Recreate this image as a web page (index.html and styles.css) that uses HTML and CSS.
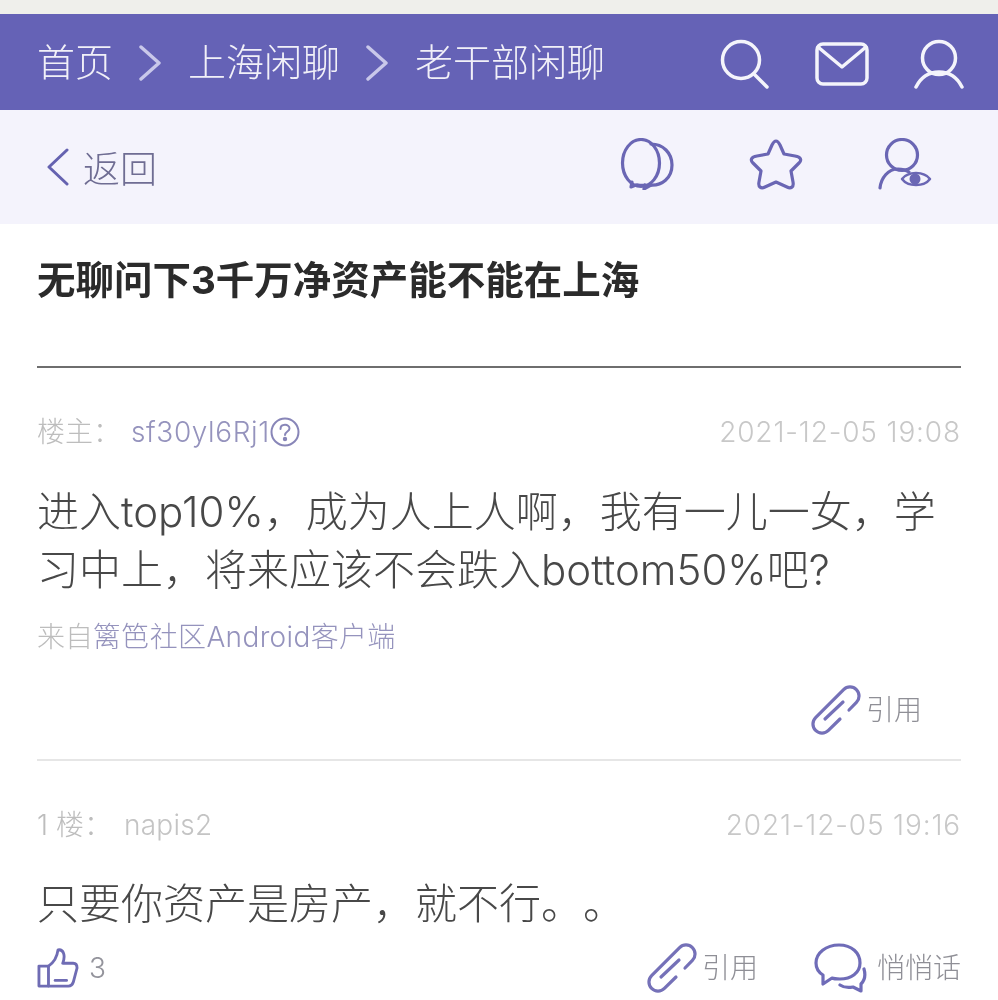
FILE: index.html
```html
<!DOCTYPE html>
<html lang="zh-CN">
    <head>
        <meta charset="UTF-8">
        <meta name="viewport" content="width=device-width, initial-scale=1.0">
        <link rel="stylesheet" href="styles.css">
        <title>无聊问下3千万净资产能不能在上海</title>
    </head>
    <body>
        <div class="top-strip"></div>
        <nav class="nav">
            <div class="crumbs">
                <span>首页</span>
                <svg class="crumb-arrow" viewBox="0 0 22 36"><path d="M2 2 L20 18 L2 34"/></svg>
                <span>上海闲聊</span>
                <svg class="crumb-arrow" viewBox="0 0 22 36"><path d="M2 2 L20 18 L2 34"/></svg>
                <span>老干部闲聊</span>
            </div>
            <div class="nav-icons">
                <svg class="icon-search" viewBox="0 0 50 50"><circle cx="21" cy="21" r="18.5"/><path d="M34 35 L47 48"/></svg>
                <svg class="icon-mail" viewBox="0 0 54 44"><rect x="2" y="2" width="50" height="40" rx="6"/><path d="M3 5 L27 25 L51 5"/></svg>
                <svg class="icon-user" viewBox="0 0 50 50"><circle cx="25" cy="19" r="16.5"/><path d="M2 48 C7 38 15 33 25 33 C35 33 43 38 48 48"/></svg>
            </div>
        </nav>
        <div class="subbar">
            <div class="back">
                <svg class="back-arrow" viewBox="0 0 24 38"><path d="M21 2 L3 19 L21 36"/></svg>
                <span>返回</span>
            </div>
            <div class="sub-icons">
                <svg class="icon-bubbles" viewBox="0 0 54 52"><ellipse cx="21" cy="25" rx="18.5" ry="23.5"/><path d="M31 6 C43 6 52 15 52 27 C52 40 42 48 30 47 C26 47 22 48 18 47"/><path d="M12 44 L11 49 L16 47"/><path d="M25 47 L24 51 L31 47"/></svg>
                <svg class="icon-star" viewBox="0 0 54 52"><path d="M27 3 C29 3 30 5 31 7 L35 16 L46 18 C52 19 53 22 50 25 L42 33 L44 44 C45 49 42 51 38 49 L27 44 L16 49 C12 51 9 49 10 44 L12 33 L4 25 C1 22 2 19 8 18 L19 16 L23 7 C24 5 25 3 27 3 Z"/></svg>
                <svg class="icon-watch" viewBox="0 0 54 52"><circle cx="24" cy="17" r="15.5"/><path d="M2 50 C3 40 10 31 20 31 C24 31 28 32 31 34"/><path class="eye" d="M24 41 C30 33 46 33 52 41 C46 49 30 49 24 41 Z"/><circle class="pupil" cx="37" cy="41" r="5.5"/></svg>
            </div>
        </div>
        <main class="content">
            <h1 class="title">无聊问下3千万净资产能不能在上海</h1>
            <section class="post first-post">
                <div class="post-head">
                    <div class="author"><span class="label">楼主：</span><span class="name">sf30yl6Rj1</span><svg class="icon-help" viewBox="0 0 30 30"><circle cx="15" cy="15" r="13.5"/><path d="M10.5 12 C10.5 6.5 19.5 6.5 19.5 11.5 C19.5 14.5 15 14.5 15 18"/><circle class="dot" cx="15" cy="22" r="1.2"/></svg></div>
                    <span class="time">2021-12-05 19:08</span>
                </div>
                <p class="post-body">进入top10%，成为人上人啊，我有一儿一女，学习中上，将来应该不会跌入bottom50%吧?</p>
                <div class="source"><span class="label">来自</span><span class="name">篱笆社区Android客户端</span></div>
                <div class="actions">
                    <div class="action">
                        <svg class="icon-clip" viewBox="0 0 50 50"><path d="M38 25 L45.4 17.4 A9 9 0 0 0 32.6 4.6 L4.6 32.6 A9 9 0 0 0 17.4 45.4 L29 34"/><path d="M14 34 L32 17"/></svg>
                        <span>引用</span>
                    </div>
                </div>
            </section>
            <section class="post">
                <div class="post-head">
                    <div class="author"><span class="label">1 楼：</span><span class="reply-name">napis2</span></div>
                    <span class="time">2021-12-05 19:16</span>
                </div>
                <p class="post-body reply-body">只要你资产是房产，就不行。。</p>
                <div class="reply-foot">
                    <div class="like">
                        <svg class="icon-thumb" viewBox="0 0 44 42"><path d="M2 19 L12 19 L12 40 L2 40 Z"/><path d="M12 19 C18 15 21 10 22 2 C28 1 30 8 27 16 L38 16 C41 16 42 18 42 21 L38 36 C37 39 36 40 33 40 L12 40"/><path d="M19 34 L31 34"/></svg>
                        <span>3</span>
                    </div>
                    <div class="reply-actions">
                        <div class="action">
                            <svg class="icon-clip" viewBox="0 0 50 50"><path d="M38 25 L45.4 17.4 A9 9 0 0 0 32.6 4.6 L4.6 32.6 A9 9 0 0 0 17.4 45.4 L29 34"/><path d="M14 34 L32 17"/></svg>
                            <span>引用</span>
                        </div>
                        <div class="action chat-action">
                            <svg class="icon-chat" viewBox="0 0 54 50"><path d="M25 2 C38 2 46 10 46 20 C46 30 37 36 26 36 C22 36 20 36 18 35 L9 41 L9 32 C4 29 2 25 2 20 C2 10 12 2 25 2 Z"/><path d="M50 26 C52 33 50 38 47 41 L47 48 L39 44 C34 45 29 44 26 42"/></svg>
                            <span>悄悄话</span>
                        </div>
                    </div>
                </div>
            </section>
        </main>
    </body>
</html>
```

FILE: styles.css
```css
body, html {
    margin: 0;
    background: #fff;
}
body {
    height: 1000px;
    overflow: hidden;
    font-family: Inter, "Noto Sans CJK SC", sans-serif;
    font-weight: 300;
    text-spacing-trim: space-all;
    filter: blur(0.5px);
}
svg {
    fill: none;
    display: block;
    stroke-linecap: round;
    stroke-linejoin: round;
}

.top-strip {
    height: 14px;
    background: #efefeb;
}

/* header */
.nav {
    height: 96px;
    background: #6562b6;
    color: #f1f0f8;
    display: flex;
    align-items: center;
    justify-content: space-between;
    padding: 0 34px 0 37px;
}
.crumbs {
    display: flex;
    align-items: center;
    font-size: 38px;
    line-height: 48px;
}
.crumb-arrow {
    width: 22px;
    height: 36px;
    margin: 2px 27px 0 26px;
    stroke: #c9c8ea;
    stroke-width: 3.4;
}
.nav-icons {
    display: flex;
    align-items: center;
    gap: 45px;
    margin-top: 4px;
}
.nav-icons svg {
    stroke: #f4f4fb;
    stroke-width: 3.5;
}
.icon-search {
    width: 50px;
    height: 50px;
}
.icon-mail {
    width: 54px;
    height: 44px;
}
.icon-user {
    width: 50px;
    height: 50px;
}

.subbar {
    height: 114px;
    background: #f4f3fc;
    display: flex;
    align-items: center;
    justify-content: space-between;
    padding: 0 66px 0 46px;
}
.back {
    display: flex;
    align-items: center;
    gap: 13px;
    font-size: 37px;
    color: #6f6d93;
}
.back-arrow {
    width: 24px;
    height: 38px;
    stroke: #6562b0;
    stroke-width: 3;
}
.sub-icons {
    display: flex;
    align-items: center;
    gap: 75px;
    margin-top: -6px;
}
.sub-icons svg {
    width: 54px;
    height: 52px;
    stroke: #6a66b4;
    stroke-width: 3.2;
}
.sub-icons .eye {
    fill: #f4f3fc;
    stroke-width: 2.5;
}
.sub-icons .pupil {
    fill: #6a66b4;
    stroke: none;
}

/* thread */
.content {
    padding: 0 37px;
}
.title {
    margin: 0;
    height: 144px;
    box-sizing: border-box;
    padding-top: 34px;
    border-bottom: 2px solid #6e6e6e;
    font-size: 38.5px;
    line-height: 44px;
    font-weight: 700;
    color: #2b2b2b;
}
.post-head {
    display: flex;
    align-items: center;
    justify-content: space-between;
    font-size: 28px;
    line-height: 40px;
    color: #c0c0c0;
}
.first-post .post-head {
    padding-top: 44px;
}
.author {
    display: flex;
    align-items: center;
}
.label {
    color: #bdbdbd;
}
.name {
    color: #9593bd;
}
.first-post .post-head .label {
    margin-right: 10px;
}
.first-post .post-head .name {
    letter-spacing: 0.6px;
}
.source .name {
    letter-spacing: 0.35px;
}
.reply-name {
    color: #c4c4c4;
    margin-left: 12px;
    letter-spacing: 0.3px;
}
.time {
    color: #c8c8c8;
    letter-spacing: 0.85px;
}
.icon-help {
    width: 30px;
    height: 30px;
    stroke: #8886b8;
    stroke-width: 2;
}
.icon-help .dot {
    fill: #8886b8;
}
.post-body {
    margin: 0;
    padding-top: 31px;
    font-size: 42px;
    line-height: 58px;
    color: #484848;
}
.source {
    margin-top: 18px;
    font-size: 28px;
    line-height: 40px;
}
.actions {
    display: flex;
    justify-content: flex-end;
    padding: 28px 39px 24px 0;
    border-bottom: 2px solid #e6e6e6;
}
.action {
    display: flex;
    align-items: center;
    gap: 5px;
    font-size: 28px;
    line-height: 50px;
    color: #8f8f96;
}
.chat-action {
    gap: 9px;
}
.icon-clip {
    width: 50px;
    height: 50px;
    stroke: #7571b8;
    stroke-width: 3.2;
}
.post + .post .post-head {
    padding-top: 44px;
}
.reply-body {
    padding-top: 30px;
}
.reply-foot {
    display: flex;
    align-items: center;
    justify-content: space-between;
    margin-top: 10px;
}
.like {
    display: flex;
    align-items: center;
    gap: 10px;
    font-size: 28px;
    color: #94949c;
}
.icon-thumb {
    width: 42px;
    height: 40px;
    stroke: #6f6cb4;
    stroke-width: 3;
}
.reply-actions {
    display: flex;
    align-items: center;
    gap: 56px;
}
.icon-chat {
    width: 54px;
    height: 50px;
    stroke: #6f6cb8;
    stroke-width: 3.2;
}
```
